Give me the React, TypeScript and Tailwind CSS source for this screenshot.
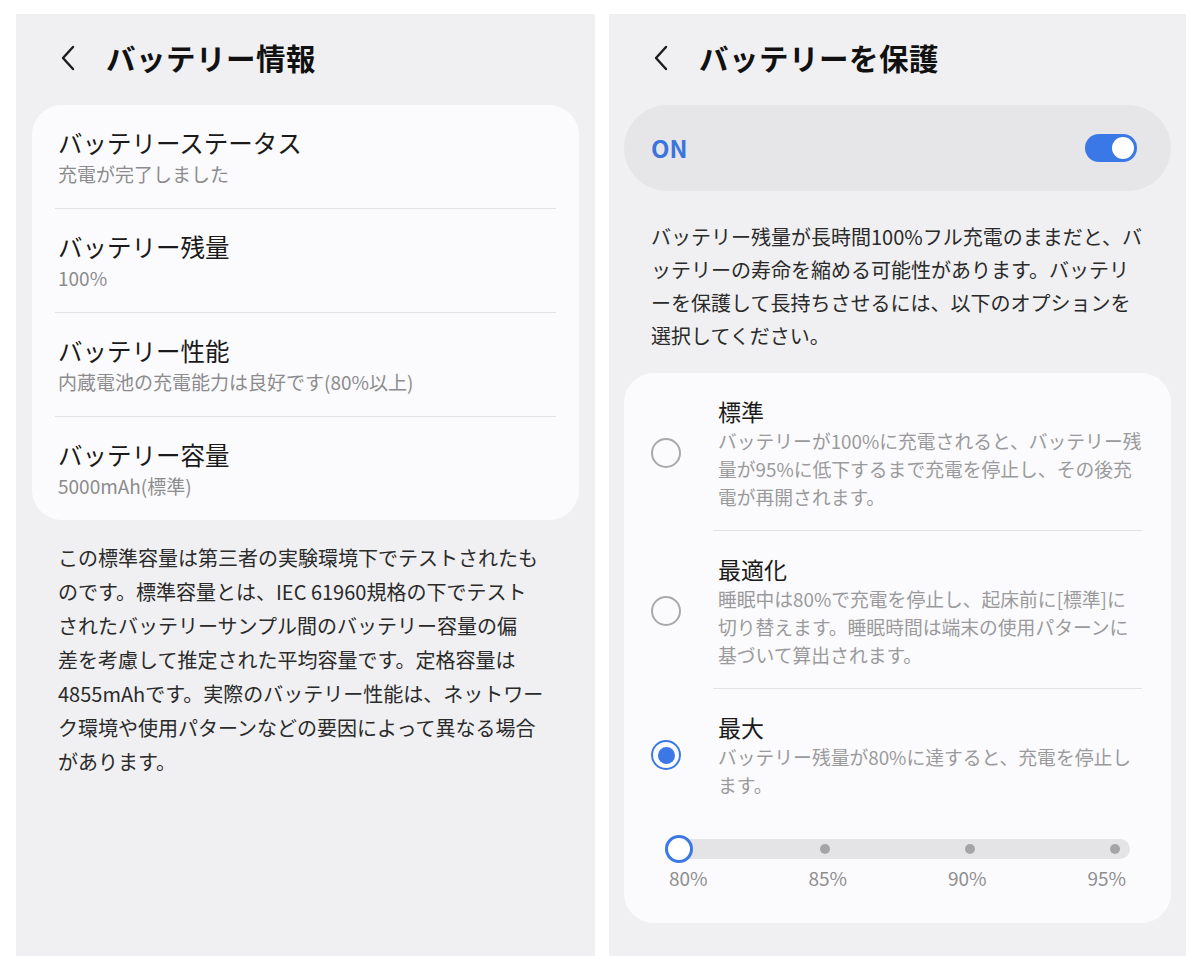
import React from "react";

const FONT = "font-['Noto_Sans_CJK_JP','Noto_Sans',sans-serif]";

function Chevron() {
  return (
    <svg width="18" height="28" viewBox="0 0 18 28" fill="none" className="shrink-0">
      <polyline points="14,3 4,14 14,25" stroke="#1c1c1e" strokeWidth="2.4" strokeLinecap="round" strokeLinejoin="round" />
    </svg>
  );
}

function Header({ title }: { title: string }) {
  return (
    <div className="h-[88px] mb-[3px] flex items-center pl-[43px] shrink-0">
      <Chevron />
      <div className="ml-[29px] text-[29.5px] font-bold text-[#111] leading-none tracking-[0.5px]">{title}</div>
    </div>
  );
}

const infoItems = [
  { t: "バッテリーステータス", s: "充電が完了しました" },
  { t: "バッテリー残量", s: "100%" },
  { t: "バッテリー性能", s: "内蔵電池の充電能力は良好です(80%以上)" },
  { t: "バッテリー容量", s: "5000mAh(標準)" },
];

const leftPara = [
  "この標準容量は第三者の実験環境下でテストされたも",
  "のです。標準容量とは、IEC 61960規格の下でテスト",
  "されたバッテリーサンプル間のバッテリー容量の偏",
  "差を考慮して推定された平均容量です。定格容量は",
  "4855mAhです。実際のバッテリー性能は、ネットワー",
  "ク環境や使用パターンなどの要因によって異なる場合",
  "があります。",
];

const rightPara = [
  "バッテリー残量が長時間100%フル充電のままだと、バ",
  "ッテリーの寿命を縮める可能性があります。バッテリ",
  "ーを保護して長持ちさせるには、以下のオプションを",
  "選択してください。",
];

const options = [
  {
    t: "標準",
    d: [
      "バッテリーが100%に充電されると、バッテリー残",
      "量が95%に低下するまで充電を停止し、その後充",
      "電が再開されます。",
    ],
    sel: false,
  },
  {
    t: "最適化",
    d: [
      "睡眠中は80%で充電を停止し、起床前に[標準]に",
      "切り替えます。睡眠時間は端末の使用パターンに",
      "基づいて算出されます。",
    ],
    sel: false,
  },
  {
    t: "最大",
    d: ["バッテリー残量が80%に達すると、充電を停止し", "ます。"],
    sel: true,
  },
];

function Radio({ sel }: { sel: boolean }) {
  if (sel) {
    return (
      <div className="w-[30px] h-[30px] rounded-full border-[2.5px] border-[#3b78e7] flex items-center justify-center shrink-0">
        <div className="w-[17px] h-[17px] rounded-full bg-[#3b78e7]" />
      </div>
    );
  }
  return <div className="w-[30px] h-[30px] rounded-full border-[2px] border-[#a9a9ab] shrink-0" />;
}

function LeftPanel() {
  return (
    <div className="w-[579px] h-[942px] bg-[#f0f0f2] flex flex-col">
      <Header title="バッテリー情報" />
      <div className="mx-[16px] bg-[#fbfbfd] rounded-[30px] flex flex-col">
        {infoItems.map((it, i) => (
          <div key={i} className="flex flex-col">
            {i > 0 && <div className="mx-[23px] h-[1px] bg-[#e3e3e6]" />}
            <div className="h-[103px] px-[26px] pt-[22px]">
              <div className="text-[24.5px] leading-[32px] text-[#1a1a1a]">{it.t}</div>
              <div className="text-[19px] leading-[29px] text-[#8c8c8e]">{it.s}</div>
            </div>
          </div>
        ))}
      </div>
      <div className="mt-[21px] pl-[42px] text-[20px] leading-[34px] text-[#2a2a2a]">
        {leftPara.map((l, i) => (
          <div key={i} className="whitespace-nowrap">{l}</div>
        ))}
      </div>
    </div>
  );
}

function RightPanel() {
  return (
    <div className="w-[577px] h-[942px] bg-[#f0f0f2] flex flex-col">
      <Header title="バッテリーを保護" />
      <div className="mx-[15px] h-[86px] rounded-full bg-[#e6e6e8] flex items-center justify-between pl-[27px] pr-[34px]">
        <div className="text-[24px] font-bold text-[#3b74dd]">ON</div>
        <div className="w-[52px] h-[28px] rounded-full bg-[#3b78e7] flex items-center justify-end pr-[3px]">
          <div className="w-[22px] h-[22px] rounded-full bg-white" />
        </div>
      </div>
      <div className="mt-[29px] pl-[42px] text-[20px] leading-[33px] text-[#2a2a2a]">
        {rightPara.map((l, i) => (
          <div key={i} className="whitespace-nowrap">{l}</div>
        ))}
      </div>
      <div className="mt-[21px] mx-[15px] bg-[#fbfbfd] rounded-[30px] flex flex-col pb-[32px]">
        {options.map((o, i) => (
          <div key={i} className="flex flex-col">
            {i > 0 && <div className="ml-[89px] mr-[29px] h-[1.5px] bg-[#e3e3e6]" />}
            <div className={`flex items-center pl-[27px] pt-[22px] ${i < 2 ? "pb-[18.5px]" : ""}`}>
              <Radio sel={o.sel} />
              <div className="ml-[37px] flex flex-col">
                <div className="text-[23px] leading-[32px] text-[#1a1a1a]">{o.t}</div>
                <div className="text-[18.8px] leading-[28px] text-[#9a9a9c]">
                  {o.d.map((l, j) => (
                    <div key={j} className="whitespace-nowrap">{l}</div>
                  ))}
                </div>
              </div>
            </div>
          </div>
        ))}
        <div className="mt-[40px] mx-[41px] relative h-[20px] rounded-full bg-[#e4e4e6]">
          <div className="absolute left-[0px] top-[-4px] w-[28px] h-[28px] rounded-full border-[3px] border-[#3b78e7] bg-white" />
          <div className="absolute left-[155px] top-[5px] w-[10px] h-[10px] rounded-full bg-[#a5a5a7]" />
          <div className="absolute left-[300px] top-[5px] w-[10px] h-[10px] rounded-full bg-[#a5a5a7]" />
          <div className="absolute left-[445px] top-[5px] w-[10px] h-[10px] rounded-full bg-[#a5a5a7]" />
        </div>
        <div className="mt-[6px] mx-[45px] flex justify-between text-[19px] leading-[26px] text-[#8e8e90]">
          <span>80%</span>
          <span>85%</span>
          <span>90%</span>
          <span>95%</span>
        </div>
      </div>
    </div>
  );
}

export default function App() {
  return (
    <div className={`w-[1200px] h-[968px] bg-white flex gap-[14px] pl-[16px] pt-[14px] ${FONT}`}>
      <LeftPanel />
      <RightPanel />
    </div>
  );
}
